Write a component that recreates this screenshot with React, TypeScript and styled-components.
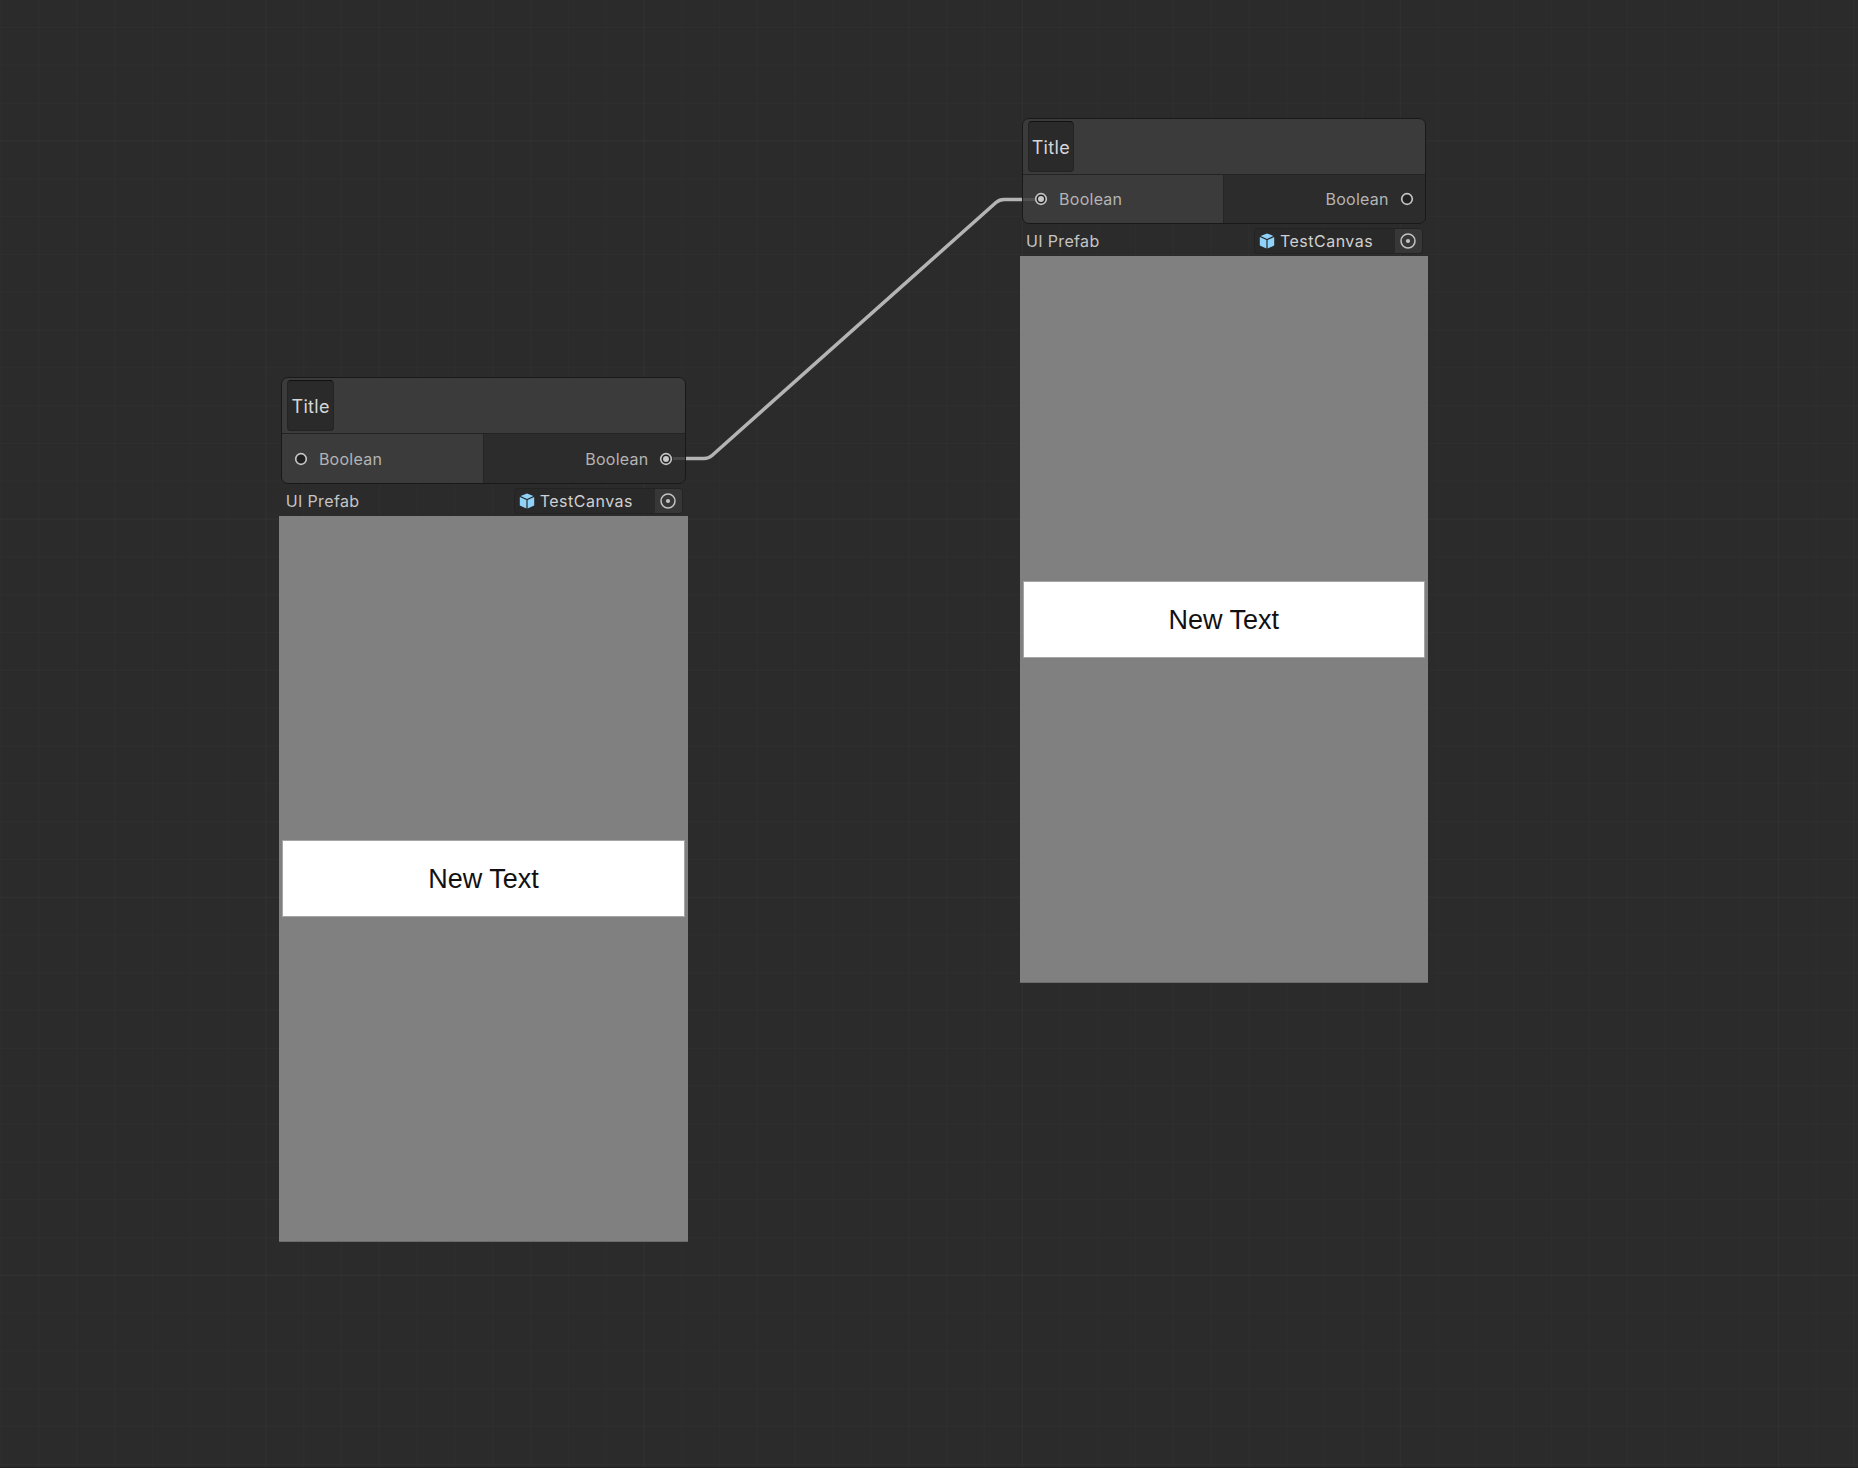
import React from "react";
import styled, { createGlobalStyle } from "styled-components";

interface NodeData {
  id: string;
  x: number;
  y: number;
  inputConnected: boolean;
  outputConnected: boolean;
}

const nodes: NodeData[] = [
  { id: "a", x: 279.4, y: 377.3, inputConnected: false, outputConnected: true },
  { id: "b", x: 1019.6, y: 117.6, inputConnected: true, outputConnected: false },
];

const Port = ({ connected }: { connected: boolean }) => (
  <PortIcon viewBox="0 0 14 14" width="14" height="14">
    <circle cx="7" cy="7" r="5.3" fill="#202020" stroke="#c4c4c4" strokeWidth="1.7" />
    {connected && <circle cx="7" cy="7" r="3" fill="#c8c8c8" />}
  </PortIcon>
);

const PrefabIcon = () => (
  <svg viewBox="0 0 16 16" width="16" height="16">
    <path d="M8 0.4 L14.4 2.9 L8 5.9 L1.6 2.9 Z" fill="#8fd3fb" />
    <path d="M0.8 4 L7.4 7 V15.6 L0.8 12.6 Z" fill="#8fd3fb" />
    <path d="M15.2 4 L8.6 7 V15.6 L15.2 12.6 Z" fill="#8fd3fb" />
  </svg>
);

const PickerIcon = () => (
  <svg viewBox="0 0 16 16" width="16" height="16">
    <circle cx="8" cy="8" r="7" fill="none" stroke="#c4c4c4" strokeWidth="1.5" />
    <circle cx="8" cy="8" r="2.1" fill="#c4c4c4" />
  </svg>
);

const GraphNode = ({ node }: { node: NodeData }) => (
  <NodeWrapper style={{ left: node.x, top: node.y }}>
    <Card>
      <TitleBar>
        <TitleField>Title</TitleField>
      </TitleBar>
      <Ports>
        <PortCell side="input">
          <Port connected={node.inputConnected} />
          <PortLabel>Boolean</PortLabel>
          {node.inputConnected && <PortStub side="input" />}
        </PortCell>
        <PortCell side="output">
          <PortLabel>Boolean</PortLabel>
          <Port connected={node.outputConnected} />
          {node.outputConnected && <PortStub side="output" />}
        </PortCell>
      </Ports>
    </Card>
    <PrefabRow>
      <PrefabLabel>UI Prefab</PrefabLabel>
      <ObjectField>
        <PrefabIcon />
        <ObjectName>TestCanvas</ObjectName>
        <PickerButton>
          <PickerIcon />
        </PickerButton>
      </ObjectField>
    </PrefabRow>
    <Preview>
      <PreviewText>New Text</PreviewText>
    </Preview>
  </NodeWrapper>
);

const App = () => (
  <>
    <GlobalStyle />
    <GraphCanvas>
      <Edge viewBox="0 0 1858 1468" width="1858" height="1468">
        <path
          d="M685 458.5 H704 Q708.5 458.5 712 455.5 L996 202.5 Q999.5 199.5 1004 199.5 H1022"
          fill="none"
          stroke="#b4b4b4"
          strokeWidth="3.5"
        />
      </Edge>
      {nodes.map((node) => (
        <GraphNode key={node.id} node={node} />
      ))}
    </GraphCanvas>
  </>
);

const GlobalStyle = createGlobalStyle`
  * {
    box-sizing: border-box;
  }
  body {
    margin: 0;
    background: #2b2b2b;
  }
`;

const GraphCanvas = styled.main`
  position: relative;
  width: 1858px;
  height: 1468px;
  overflow: hidden;
  font-family: Inter, sans-serif;
  color: #c4c4c4;
  background-color: #2b2b2b;
  background-image:
    linear-gradient(90deg, rgba(255, 255, 255, 0.015) 1px, transparent 1px),
    linear-gradient(rgba(255, 255, 255, 0.015) 1px, transparent 1px),
    linear-gradient(90deg, rgba(255, 255, 255, 0.016) 1px, transparent 1px),
    linear-gradient(rgba(255, 255, 255, 0.016) 1px, transparent 1px);
  background-size: 378.2px 378.2px, 378.2px 378.2px, 37.82px 37.82px, 37.82px 37.82px;
  background-position: 265.5px 0, 0 140.5px, 0.7px 0, 0 27px;
  border-bottom: 1px solid #202020;
`;

const Edge = styled.svg`
  position: absolute;
  top: 0;
  left: 0;
`;

const NodeWrapper = styled.section`
  position: absolute;
  width: 408.4px;
`;

const Card = styled.div`
  width: 404.6px;
  height: 106.4px;
  margin-left: 2px;
  border: 1px solid #191919;
  border-radius: 7px;
  overflow: hidden;
`;

const TitleBar = styled.header`
  height: 56px;
  padding: 2px 0 0 5px;
  background: #3b3b3b;
  border-bottom: 1px solid #232323;
`;

const TitleField = styled.div`
  display: flex;
  align-items: center;
  justify-content: center;
  width: 46.6px;
  height: 51px;
  padding-top: 2px;
  border: 1px solid #232323;
  border-top: 1px solid #111;
  border-radius: 4px;
  background: #2a2a2a;
  color: #d6d6d6;
  font-size: 18px;
  letter-spacing: 0.35px;
`;

const Ports = styled.div`
  display: grid;
  grid-template-columns: 200.6px 1fr;
  height: 49px;
`;

interface SideProps {
  side: "input" | "output";
}
const PortCell = styled.div<SideProps>`
  position: relative;
  display: flex;
  align-items: center;
  justify-content: ${({ side }) => (side === "input" ? "flex-start" : "flex-end")};
  gap: 11px;
  padding: 0 11.5px 0.4px;
  background: ${({ side }) => (side === "input" ? "#3b3b3b" : "#2c2c2c")};
  border-left: ${({ side }) => (side === "input" ? "0" : "1px solid #252525")};
`;

const PortIcon = styled.svg`
  flex: none;
`;

const PortLabel = styled.span`
  font-size: 16px;
  line-height: 20px;
  letter-spacing: 0.25px;
  color: #b4b4b4;
`;

const PortStub = styled.i<SideProps>`
  position: absolute;
  top: 23px;
  ${({ side }) => (side === "input" ? "left: 0" : "right: 0")};
  width: 12px;
  height: 3px;
  background: ${({ side }) => (side === "input" ? "#505050" : "#464646")};
`;

const PrefabRow = styled.div`
  display: flex;
  align-items: center;
  justify-content: space-between;
  height: 31.9px;
  padding: 2px 5px 0 6.4px;
`;

const PrefabLabel = styled.span`
  font-size: 16px;
  letter-spacing: 0.35px;
`;

const ObjectField = styled.div`
  display: flex;
  align-items: center;
  width: 168.5px;
  height: 26px;
  padding-left: 4px;
  border: 1px solid #232323;
  border-radius: 4px;
  background: #292929;
`;

const ObjectName = styled.span`
  flex: 1;
  margin-left: 4.4px;
  font-size: 16px;
  letter-spacing: 0.5px;
  color: #d0d0d0;
`;

const PickerButton = styled.div`
  display: flex;
  align-items: center;
  justify-content: center;
  width: 27px;
  height: 24px;
  border-radius: 0 3px 3px 0;
  background: #373737;
`;

const Preview = styled.div`
  display: flex;
  align-items: center;
  height: 726.7px;
  padding: 0 4px;
  background: #808080;
  box-shadow: inset 0 -1px #6c6c6c;
`;

const PreviewText = styled.div`
  display: flex;
  align-items: center;
  justify-content: center;
  width: 100%;
  height: 75px;
  padding-top: 2px;
  background: #fff;
  box-shadow: 0 0 0 1px #a5a5a5;
  color: #111;
  font-family: "Liberation Sans", Arial, sans-serif;
  font-size: 27px;
`;

export default App;
